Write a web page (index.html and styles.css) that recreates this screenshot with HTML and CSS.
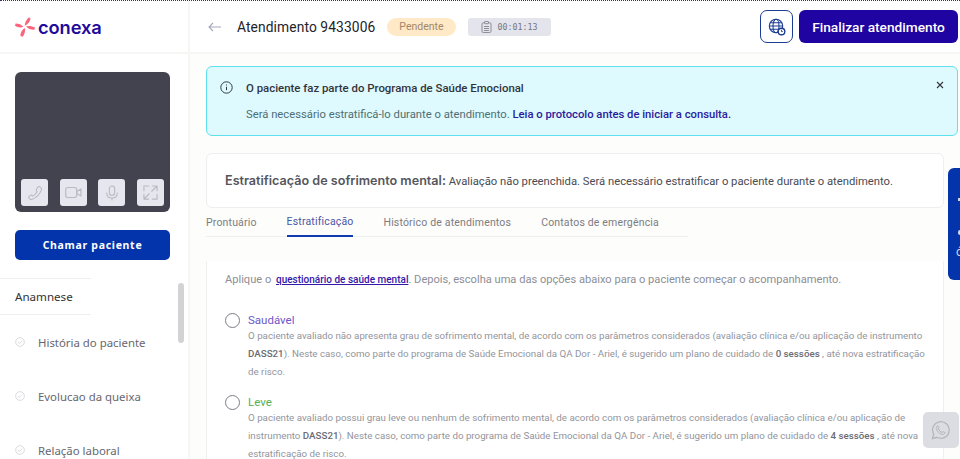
FILE: index.html
```html
<!DOCTYPE html>
<html lang="pt-BR">
<head>
<meta charset="utf-8">
<title>Atendimento 9433006</title>
<link rel="stylesheet" href="styles.css">
</head>
<body>
<div class="page">
  <aside class="sidebar">
    <div class="logo">
      <svg class="logo-mark" width="20" height="20" viewBox="0 0 20 20"><g fill="#f8657c"><path d="M9.800 8.800 C9.800 5.800 11.200 2.500 14 0.200 L15.600 1.800 C14.800 4.800 12.800 7.600 9.800 8.800Z"/><path d="M11 9.600 C13.600 8.600 17 9 20 10.600 L19.400 12.800 C16.200 13 13 11.800 11 9.600Z"/><path d="M9.800 11 C10.600 13.600 9.800 17 7.800 19.800 L5.400 19 C5.200 15.800 7 12.800 9.800 11Z"/><path d="M8.400 9.800 C6 11 2.800 10.600 0 8.800 L0.600 6.400 C3.800 6.400 6.800 7.600 8.400 9.800Z"/></g></svg>
      <span class="logo-text">conexa</span>
    </div>
    <div class="video">
      <button class="vbtn" type="button" aria-label="Telefone"><svg width="16" height="16" viewBox="0 0 24 24" fill="none" stroke="#b9bac1" stroke-width="1.6" stroke-linecap="round" stroke-linejoin="round"><path d="M19 2.500l2.500 2.500c.6 .6 .6 1.300 .3 2C19.500 13.500 13.500 19.500 7 21.800c-.7 .3-1.400 .2-2-.3L2.800 19.300c-.7-.7-.6-1.700 .2-2.200l2.500-1.600c.7-.4 1.400-.3 2 .2l1 1c2.800-1.500 5.300-4 6.800-6.800l-1-1c-.5-.6-.6-1.300-.2-2L15.700 4c.6-.9 2.400-2.400 3.300-1.500z"/></svg></button>
      <button class="vbtn" type="button" aria-label="Câmera"><svg width="17" height="17" viewBox="0 0 24 24" fill="none" stroke="#b9bac1" stroke-width="1.600" stroke-linejoin="round"><rect x="1" y="5" width="15.500" height="14" rx="3"/><path d="M16.500 10.500l6-3.500v10l-6-3.500z"/></svg></button>
      <button class="vbtn" type="button" aria-label="Microfone"><svg width="16" height="16" viewBox="0 0 24 24" fill="none" stroke="#b9bac1" stroke-width="1.600" stroke-linecap="round"><rect x="8" y="1.500" width="8" height="14" rx="4"/><path d="M4 12c0 5 3.500 7.500 8 7.500s8-2.500 8-7.500M12 19.500v3"/></svg></button>
      <button class="vbtn" type="button" aria-label="Tela cheia"><svg width="15" height="15" viewBox="0 0 24 24" fill="none" stroke="#b9bac1" stroke-width="1.800" stroke-linecap="round" stroke-linejoin="round"><path d="M1.500 9V1.500H9M15 1.500h7.500V9M22.500 15v7.500H15M9 22.500H1.500V15M14 10l8-8M10 14l-8 8"/></svg></button>
    </div>
    <button class="call" type="button">Chamar paciente</button>
    <div class="side-body">
      <div class="side-list">
        <div class="section">Anamnese</div>
        <div class="item"><svg class="check" width="10" height="10" viewBox="0 0 12 12" fill="none" stroke="#d4d5da"><circle cx="6" cy="6" r="5.200"/><path d="M3.500 6.200l1.800 1.600 3.200-3.400"/></svg>História do paciente</div>
        <div class="item"><svg class="check" width="10" height="10" viewBox="0 0 12 12" fill="none" stroke="#d4d5da"><circle cx="6" cy="6" r="5.200"/><path d="M3.500 6.200l1.800 1.600 3.200-3.400"/></svg>Evolucao da queixa</div>
        <div class="item"><svg class="check" width="10" height="10" viewBox="0 0 12 12" fill="none" stroke="#d4d5da"><circle cx="6" cy="6" r="5.200"/><path d="M3.500 6.200l1.800 1.600 3.200-3.400"/></svg>Relação laboral</div>
      </div>
      <div class="scrollthumb"></div>
    </div>
  </aside>
  <div class="main">
    <header class="topbar">
      <svg class="back" width="14" height="10" viewBox="0 0 14 10" fill="none" stroke="#a3a9bd" stroke-width="1.100"><path d="M13 5H1M5 1L1 5l4 4"/></svg>
      <h1 class="title">Atendimento 9433006</h1>
      <span class="badge">Pendente</span>
      <span class="timer"><svg width="11" height="12" viewBox="0 0 11 12" fill="none" stroke="#83848e" stroke-width=".9"><rect x="1" y="1.800" width="9" height="9.700" rx="1.300"/><rect x="3.500" y=".5" width="4" height="2.200" rx=".6" fill="#e4e4ed"/><path d="M3 5.500h5M3 7.500h5M3 9.500h5"/></svg>00:01:13</span>
      <div class="top-actions">
        <button class="globe" type="button" aria-label="Fuso horário"><svg width="18" height="18" viewBox="0 0 18 18" fill="none" stroke="#1d3c93" stroke-width="1.100"><circle cx="8" cy="8" r="6.700"/><ellipse cx="8" cy="8" rx="3" ry="6.700"/><path d="M1.300 8h13.400M2.200 4.800h11.600M2.200 11.200h11.600"/><circle cx="13.500" cy="13.500" r="3.300" fill="#fff" stroke-width="1.400"/><path d="M13.500 11.800v1.800h1.400" stroke-width=".9"/></svg></button>
        <button class="finish" type="button">Finalizar atendimento</button>
      </div>
    </header>
    <div class="content">
      <section class="alert">
        <svg class="alert-icon" width="13" height="13" viewBox="0 0 13 13" fill="none" stroke="#2f3b3e" stroke-width="1"><circle cx="6.500" cy="6.500" r="5.700"/><path d="M6.500 5.800v3.400M6.500 3.500v1"/></svg>
        <div class="alert-text">
          <p class="alert-title">O paciente faz parte do Programa de Saúde Emocional</p>
          <p class="alert-body">Será necessário estratificá-lo durante o atendimento. <a href="#" class="alert-link">Leia o protocolo antes de iniciar a consulta.</a></p>
        </div>
        <svg class="close" width="8" height="8" viewBox="0 0 8 8" stroke="#33343a" stroke-width="1.100"><path d="M1 1l6 6M7 1L1 7"/></svg>
      </section>
      <section class="summary">
        <strong>Estratificação de sofrimento mental:</strong> Avaliação não preenchida. Será necessário estratificar o paciente durante o atendimento.
      </section>
      <nav class="tabs">
        <a class="tab" href="#">Prontuário</a>
        <a class="tab active" href="#">Estratificação</a>
        <a class="tab" href="#">Histórico de atendimentos</a>
        <a class="tab" href="#">Contatos de emergência</a>
      </nav>
      <section class="panel">
        <p class="intro">Aplique o <a href="#" class="intro-link">questionário de saúde mental</a>. Depois, escolha uma das opções abaixo para o paciente começar o acompanhamento.</p>
        <div class="option">
          <span class="radio"></span>
          <div>
            <div class="opt-name healthy">Saudável</div>
            <p class="opt-desc">O paciente avaliado não apresenta grau de sofrimento mental, de acordo com os parâmetros considerados (avaliação clínica e/ou aplicação de instrumento <b>DASS21</b>). Neste caso, como parte do programa de Saúde Emocional da QA Dor - Ariel, é sugerido um plano de cuidado de <b>0 sessões</b> , até nova estratificação de risco.</p>
          </div>
        </div>
        <div class="option">
          <span class="radio"></span>
          <div>
            <div class="opt-name mild">Leve</div>
            <p class="opt-desc">O paciente avaliado possui grau leve ou nenhum de sofrimento mental, de acordo com os parâmetros considerados (avaliação clínica e/ou aplicação de instrumento <b>DASS21</b>). Neste caso, como parte do programa de Saúde Emocional da QA Dor - Ariel, é sugerido um plano de cuidado de <b>4 sessões</b> , até nova estratificação de risco.</p>
          </div>
        </div>
      </section>
    </div>
  </div>
  <div class="side-tab"><span class="tab-tick"></span><span class="tab-dot"></span><span class="tab-glyph">ó</span></div>
  <button class="whats" type="button" aria-label="WhatsApp"><svg width="20" height="20" viewBox="0 0 20 20" fill="none" stroke="#b4b6be" stroke-width="1.300"><path d="M1.500 18.500l1.200-4.300A8.300 8.300 0 1 1 5.900 17.300z"/><path d="M7 5.800l1 2-.8 1c.8 1.700 2.100 2.900 3.800 3.700l1.100-.9 2 1c-.2 1.300-1.300 2-2.600 1.800C8.400 14 5.800 11.400 5.400 8.400 5.200 7.200 5.800 6 7 5.800z" stroke-width="1"/></svg></button>
</div>
</body>
</html>
```
FILE: styles.css
```css
* { box-sizing: border-box; }
html, body { margin: 0; height: 100%; overflow: hidden; }
body { font-family: Roboto, "Noto Sans", sans-serif; color: #333; background: #fff; }
p, h1 { margin: 0; }
button { font-family: inherit; border: 0; padding: 0; }
a { text-decoration: none; }

.page { position: relative; display: flex; width: 960px; height: 459px; border-top: 1px dotted #34345e; overflow: hidden; }

.sidebar { flex: 0 0 190px; height: 458px; background: #fff; border-right: 2px solid #f6f6f5; display: flex; flex-direction: column; overflow: hidden; }
.logo { height: 53px; flex: none; display: flex; align-items: center; gap: 3px; padding: 0 0 0 15px; border-bottom: 2px solid #f6f6f5; }
.logo-mark { flex: none; }
.logo-text { font-family: Inter, sans-serif; font-size: 18.300px; font-weight: 600; color: #1f0a9c; letter-spacing: -.1px; }
.video { flex: none; width: 155px; height: 140px; margin: 18px 0 0 15px; padding: 0 6px 6px; background: #43424f; border-radius: 6px; display: flex; align-items: flex-end; justify-content: space-between; }
.vbtn { width: 27px; height: 27px; border-radius: 3px; background: #e6e6ee; display: flex; align-items: center; justify-content: center; }
.call { flex: none; width: 155px; height: 30px; margin: 18px 0 0 15px; background: #0434ac; color: #fff; border-radius: 5px; font-family: "Noto Sans", sans-serif; font-size: 10.500px; font-weight: 700; letter-spacing: .7px; }
.side-body { flex: 1; display: flex; margin-top: 18px; min-height: 0; }
.side-list { flex: none; width: 178px; }
.section { width: 91px; height: 37px; border-top: 1px solid #eeeeee; border-bottom: 1px solid #eeeeee; padding-left: 15px; display: flex; align-items: center; font-family: "Noto Sans", sans-serif; font-size: 11.600px; color: #333; }
.item { height: 54px; display: flex; align-items: center; padding-left: 15px; font-family: "Noto Sans", sans-serif; font-size: 11.400px; color: #666770; }
.check { margin-right: 13px; flex: none; }
.scrollthumb { flex: none; width: 6px; height: 60px; margin-top: 5px; border-radius: 3px; background: #d3d3d3; }

.main { flex: 1; min-width: 0; background: #fdfdfb; }
.topbar { height: 53px; padding: 0 2px 0 18px; background: #fff; border-bottom: 2px solid #f6f6f5; display: flex; align-items: center; }
.back { flex: none; margin-right: 15px; }
.title { font-size: 13.800px; font-weight: 400; color: #23232a; letter-spacing: .1px; margin-right: 12px; }
.badge { height: 18px; padding: 0 12px; border-radius: 9px; background: #ffe9c6; color: #a3876a; font-size: 10.500px; display: flex; align-items: center; margin-right: 12px; }
.timer { width: 83px; height: 18px; border-radius: 3px; background: #e4e4ed; color: #75767f; display: flex; align-items: center; justify-content: center; gap: 6px; font-family: "DejaVu Sans Mono", monospace; font-size: 8.300px; }
.top-actions { margin-left: auto; display: flex; gap: 6px; }
.globe { width: 33px; height: 33px; border: 1.500px solid #1d3c93; background: #fff; border-radius: 7px; display: flex; align-items: center; justify-content: center; }
.finish { width: 159px; height: 33px; border-radius: 6px; background: #1f04a2; color: #fff; font-size: 13.700px; font-weight: 500; }

.content { padding: 12px 2px 0 16px; }
.alert { height: 70px; position: relative; display: flex; padding: 14px 0 0 13px; background: #defaff; border: 1px solid #5fe0ee; border-radius: 6px; }
.alert-icon { flex: none; margin-right: 13px; }
.alert-title { font-size: 11.400px; font-weight: 500; color: #33343a; line-height: 14px; }
.alert-body { font-size: 11.250px; color: #4f6e74; line-height: 14px; margin-top: 13px; }
.alert-link { font-weight: 500; color: #2a1a9d; }
.close { position: absolute; top: 14px; right: 13px; }
.summary { height: 55px; margin: 17px 14px 0 0; padding-left: 18px; background: #fff; border: 1px solid #eeeef0; border-radius: 6px; line-height: 53px; font-size: 11.250px; color: #4a4b52; white-space: nowrap; }
.summary strong { font-family: Inter, sans-serif; font-size: 12.600px; font-weight: 600; color: #55565c; }
.tabs { width: 482px; height: 29px; display: flex; border-bottom: 1px solid #efefef; font-size: 10.500px; white-space: nowrap; }
.tab { height: 29px; display: flex; align-items: center; color: #7b7c83; margin-right: 30px; letter-spacing: .17px; }
.tab.active { color: #4b56a4; border-bottom: 2px solid #0f3cb0; }
.panel { margin: 24px 14px 0 0; height: 210px; padding: 11px 13px 0 18px; background: #fff; border-left: 1px solid #efefef; border-right: 1px solid #efefef; }
.intro { font-size: 11.100px; color: #8d8e96; line-height: 16px; }
.intro-link { margin-left: 2px; color: #3518a8; text-decoration: underline; font-weight: 500; font-size: 10px; }
.option { display: flex; gap: 8px; margin-top: 14px; }
.intro + .option { margin-top: 25px; }
.radio { flex: none; width: 15px; height: 15px; border: 1px solid #7d7e88; border-radius: 50%; background: #fff; }
.opt-name { font-size: 11.500px; line-height: 14px; }
.opt-name.healthy { color: #6d57c8; }
.opt-name.mild { color: #54b057; }
.opt-desc { font-size: 9.750px; line-height: 18px; color: #93949c; }
.opt-desc b { font-weight: 500; color: #6b6c74; }

.side-tab { position: absolute; top: 167px; left: 948px; width: 12px; height: 112px; background: #0434ac; border-radius: 6px 0 0 6px; }
.tab-tick { position: absolute; top: 30px; left: 10px; width: 2px; height: 3px; background: #cfd7ef; }
.tab-dot { position: absolute; top: 62px; left: 10px; width: 4px; height: 5px; background: #cfd7ef; border-radius: 2px; }
.tab-glyph { position: absolute; top: 78px; left: 8px; font-size: 12px; line-height: 12px; color: #cfd7ef; }
.whats { position: absolute; top: 411px; left: 923px; width: 36px; height: 36px; background: #dcdde2; border-radius: 5px; display: flex; align-items: center; justify-content: center; }
```
